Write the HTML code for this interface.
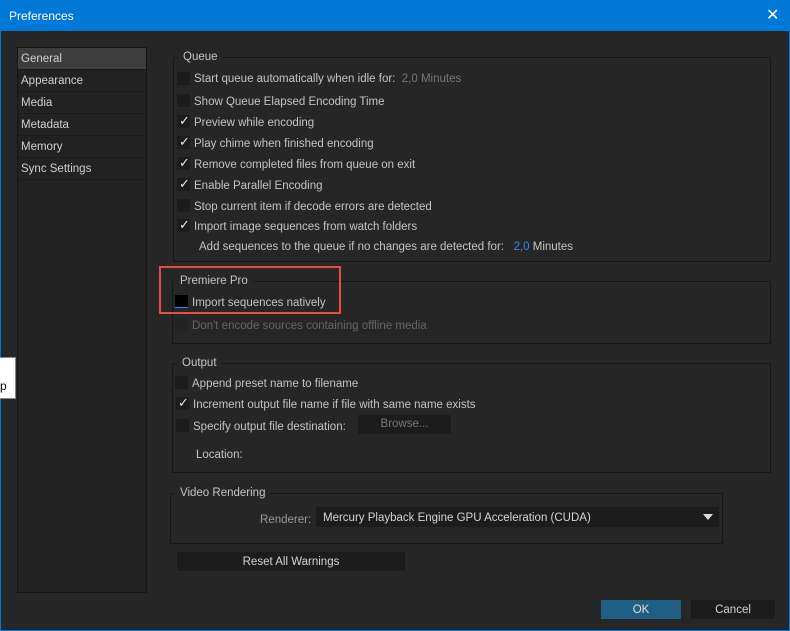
<!DOCTYPE html>
<html><head><meta charset="utf-8"><style>
*{margin:0;padding:0;box-sizing:border-box}
body{width:790px;height:631px;background:#0078d7;font-family:"Liberation Sans",sans-serif;font-size:11.5px;color:#c4c4c4;position:relative;overflow:hidden}
.win{position:absolute;left:1px;top:31px;width:788px;height:599px;background:#262626}
.title{position:absolute;left:9px;top:9px;color:#fff;font-size:12px}
.x{position:absolute;left:766px;top:5px;color:#fff;font-size:16px}
.a{position:absolute;white-space:nowrap;padding-top:2px}
.list{position:absolute;left:17px;top:47px;width:130px;height:546px;background:#222;border:1px solid #151515}
.list div{height:22px;line-height:23px;padding-left:3px;border-bottom:1px solid #1a1a1a;color:#d0d0d0}
.list .sel{background:#3d3d3d}
.box{position:absolute;border:1px solid #161616}
.lg{position:absolute;background:#262626;padding:0 5px;top:-7px;left:4px;color:#c4c4c4}
.cb{position:absolute;width:13px;height:13px;background:#1c1c1c}
.ck::after{content:"✓";position:absolute;left:2px;top:-2px;color:#e8e8e8;font-size:13px}
.dis{color:#666}
.btn{position:absolute;background:#1c1c1c;text-align:center;line-height:21px;color:#d4d4d4}
</style></head><body>
<div class="title">Preferences</div><div class="x">✕</div>
<div class="win"></div>
<div class="a" style="left:0;top:357px;width:16px;height:42px;background:#fff;border:1px solid #888;border-left:none;color:#000;font-size:12px;line-height:56px;padding-top:0">p</div>
<div class="list"><div class="sel">General</div><div>Appearance</div><div>Media</div><div>Metadata</div><div>Memory</div><div>Sync Settings</div></div>

<div class="box" style="left:173px;top:57px;width:598px;height:205px"><span class="lg">Queue</span></div>
<div class="cb" style="left:177px;top:72px"></div><div class="a" style="left:194px;top:71px">Start queue automatically when idle for:&nbsp; <span style="color:#777">2,0 Minutes</span></div>
<div class="cb" style="left:177px;top:94px"></div><div class="a" style="left:194px;top:94px">Show Queue Elapsed Encoding Time</div>
<div class="cb ck" style="left:177px;top:115px"></div><div class="a" style="left:194px;top:115px">Preview while encoding</div>
<div class="cb ck" style="left:177px;top:136px"></div><div class="a" style="left:194px;top:136px">Play chime when finished encoding</div>
<div class="cb ck" style="left:177px;top:157px"></div><div class="a" style="left:194px;top:157px">Remove completed files from queue on exit</div>
<div class="cb ck" style="left:177px;top:178px"></div><div class="a" style="left:194px;top:178px">Enable Parallel Encoding</div>
<div class="cb" style="left:177px;top:199px"></div><div class="a" style="left:194px;top:199px">Stop current item if decode errors are detected</div>
<div class="cb ck" style="left:177px;top:219px"></div><div class="a" style="left:194px;top:219px">Import image sequences from watch folders</div>
<div class="a" style="left:199px;top:239px">Add sequences to the queue if no changes are detected for:&nbsp;&nbsp; <span style="color:#2d8ceb">2,0</span> Minutes</div>

<div class="box" style="left:172px;top:281px;width:599px;height:63px"><span class="lg" style="left:2px">Premiere Pro</span></div>
<div class="a" style="left:159px;top:266px;width:182px;height:48px;border:2px solid #e84a4a;padding:0"></div>
<div class="cb" style="left:175px;top:295px;background:#000;border-bottom:1px solid #2d8ceb"></div><div class="a" style="left:192px;top:295px">Import sequences natively</div>
<div class="cb" style="left:175px;top:318px;background:#222"></div><div class="a dis" style="left:192px;top:318px">Don't encode sources containing offline media</div>

<div class="box" style="left:172px;top:363px;width:599px;height:110px"><span class="lg" style="left:4px">Output</span></div>
<div class="cb" style="left:175px;top:376px"></div><div class="a" style="left:192px;top:376px">Append preset name to filename</div>
<div class="cb ck" style="left:176px;top:397px"></div><div class="a" style="left:193px;top:397px">Increment output file name if file with same name exists</div>
<div class="cb" style="left:176px;top:419px"></div><div class="a" style="left:193px;top:419px">Specify output file destination:</div>
<div class="btn" style="left:358px;top:415px;width:93px;height:19px;color:#777;line-height:19px">Browse...</div>
<div class="a" style="left:196px;top:447px">Location:</div>

<div class="box" style="left:170px;top:493px;width:553px;height:51px"><span class="lg" style="left:4px">Video Rendering</span></div>
<div class="a" style="left:260px;top:512px;color:#999">Renderer:</div>
<div class="btn" style="left:316px;top:507px;width:403px;height:20px;text-align:left;padding-left:7px;line-height:22px">Mercury Playback Engine GPU Acceleration (CUDA)<span style="position:absolute;right:6px;top:7px;width:0;height:0;border-left:5px solid transparent;border-right:5px solid transparent;border-top:6px solid #ddd"></span></div>
<div class="btn" style="left:177px;top:552px;width:228px;height:19px">Reset All Warnings</div>
<div class="btn" style="left:601px;top:600px;width:80px;height:19px;background:#1f5f84;color:#e0e0e0">OK</div>
<div class="btn" style="left:691px;top:600px;width:84px;height:19px">Cancel</div>
</body></html>
